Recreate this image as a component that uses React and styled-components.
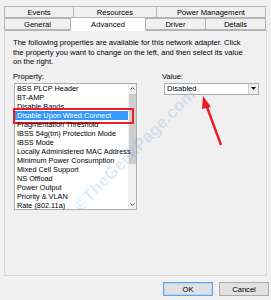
import styled, { createGlobalStyle } from 'styled-components';

const GlobalStyle = createGlobalStyle`
    html, body {
        margin: 0;
        padding: 0;
        background: #f0f0f0;
    }
    * {
        box-sizing: border-box;
    }
`;

const properties = [
    'BSS PLCP Header',
    'BT-AMP',
    'Disable Bands',
    'Disable Upon Wired Connect',
    'Fragmentation Threshold',
    'IBSS 54g(tm) Protection Mode',
    'IBSS Mode',
    'Locally Administered MAC Address',
    'Minimum Power Consumption',
    'Mixed Cell Support',
    'NS Offload',
    'Power Output',
    'Priority & VLAN',
    'Rate (802.11a)',
];

function App () {

    return (
        <>
            <GlobalStyle />
            <Window>

                <TabRow>
                    <Tab w={69}>Events</Tab>
                    <Tab w={83}>Resources</Tab>
                    <Tab w={110}>Power Management</Tab>
                </TabRow>

                <TabRow>
                    <Tab w={66}>General</Tab>
                    <Tab w={76} active>Advanced</Tab>
                    <Tab w={59}>Driver</Tab>
                    <Tab w={61}>Details</Tab>
                </TabRow>

                <Panel>
                    <Description>
                        The following properties are available for this network adapter. Click
                        the property you want to change on the left, and then select its value
                        on the right.
                    </Description>

                    <Columns>
                        <PropertyColumn>
                            <Label>Property:</Label>
                            <ListBox>
                                <Items>
                                    {properties.map((p) => (
                                        <Item key={p} selected={p === 'Disable Upon Wired Connect'}>{p}</Item>
                                    ))}
                                </Items>
                                <ScrollBar>
                                    <ScrollArrow>
                                        <svg width="5" height="3" viewBox="0 0 5 3">
                                            <path d="M0.5 2.6 L2.5 0.6 L4.5 2.6" fill="none" stroke="#555" strokeWidth="1" />
                                        </svg>
                                    </ScrollArrow>
                                    <Track>
                                        <Thumb />
                                    </Track>
                                    <ScrollArrow>
                                        <svg width="5" height="3" viewBox="0 0 5 3">
                                            <path d="M0.5 0.4 L2.5 2.4 L4.5 0.4" fill="none" stroke="#555" strokeWidth="1" />
                                        </svg>
                                    </ScrollArrow>
                                </ScrollBar>
                            </ListBox>
                        </PropertyColumn>

                        <ValueColumn>
                            <Label>Value:</Label>
                            <ComboBox>
                                <ComboText>Disabled</ComboText>
                                <ComboButton>
                                    <svg width="5" height="3" viewBox="0 0 5 3">
                                        <path d="M0 0 L5 0 L2.5 3 Z" fill="#000" />
                                    </svg>
                                </ComboButton>
                            </ComboBox>
                        </ValueColumn>
                    </Columns>
                </Panel>

                <ButtonRow>
                    <DialogButton primary>OK</DialogButton>
                    <DialogButton>Cancel</DialogButton>
                </ButtonRow>

                <Arrow width="30" height="52" viewBox="0 0 30 52">
                    <line x1="23" y1="50" x2="9" y2="12" stroke="#ea1b22" strokeWidth="2.4" />
                    <path d="M5 1 L13 12 L4 14 Z" fill="#ea1b22" />
                </Arrow>

                <Watermark>©TheGeekPage.com</Watermark>

            </Window>
        </>
    );

}

export default App;


const Window = styled.div`
    position: relative;
    width: 271px;
    height: 300px;
    padding: 6px 4px 0 4px;
    overflow: hidden;
    font-family: 'Liberation Sans', Arial, sans-serif;
    font-size: 7.6px;
    color: #000;
`;

const TabRow = styled.div`
    display: flex;
    flex-direction: row;
    height: 12px;
`;

const Tab = styled.div`
    width: ${(p) => p.w}px;
    display: flex;
    align-items: center;
    justify-content: center;
    border: 1px solid #b4b4b4;
    border-right: none;
    background: ${(p) => (p.active ? '#ffffff' : '#f0f0f0')};
    position: relative;

    &:last-child {
        border-right: 1px solid #b4b4b4;
    }

    ${(p) => p.active && `
        margin-top: -1px;
        height: 14px;
        border-bottom: none;
        border-right: 1px solid #b4b4b4;
        z-index: 2;
        & + div { border-left: none; }
    `}
`;

const Panel = styled.div`
    height: 246px;
    border: 1px solid #d9d9d9;
    border-top-color: #b4b4b4;
    background: #f0f0f0;
    padding: 7px 8px 0 8px;
    display: flex;
    flex-direction: column;
`;

const Description = styled.div`
    line-height: 9.5px;
    width: 240px;
`;

const Columns = styled.div`
    display: flex;
    flex-direction: row;
    margin-top: 5px;
`;

const PropertyColumn = styled.div`
    display: flex;
    flex-direction: column;
    width: 124px;
`;

const ValueColumn = styled.div`
    display: flex;
    flex-direction: column;
    margin-left: 25px;
`;

const Label = styled.div`
    height: 10px;
    line-height: 10px;
    margin-bottom: 1px;
`;

const ListBox = styled.div`
    display: flex;
    flex-direction: row;
    margin-left: 1px;
    width: 123px;
    height: 127px;
    border: 1px solid #abadb3;
    background: #ffffff;
`;

const Items = styled.div`
    flex: 1;
    min-width: 0;
    display: flex;
    flex-direction: column;
    padding-top: 0.5px;
`;

const Item = styled.div`
    position: relative;
    height: 9px;
    line-height: 9px;
    padding-left: 2px;
    white-space: nowrap;
    font-size: 7.3px;
    background: ${(p) => (p.selected ? '#3399ff' : 'transparent')};
    color: ${(p) => (p.selected ? '#ffffff' : '#000000')};

    ${(p) => p.selected && `
        &::after {
            content: '';
            position: absolute;
            left: -2px;
            right: -6px;
            top: -3px;
            bottom: -4px;
            border: 2.5px solid #ee1c24;
        }
    `}
`;

const ScrollBar = styled.div`
    width: 8px;
    flex-shrink: 0;
    display: flex;
    flex-direction: column;
    background: #f0f0f0;
`;

const ScrollArrow = styled.div`
    height: 9px;
    display: flex;
    align-items: center;
    justify-content: center;
`;

const Track = styled.div`
    flex: 1;
    display: flex;
    flex-direction: column;
    padding: 1px 0.5px;
`;

const Thumb = styled.div`
    height: 70px;
    background: #cdcdcd;
`;

const ComboBox = styled.div`
    display: flex;
    flex-direction: row;
    align-items: stretch;
    margin-left: 2px;
    width: 95px;
    height: 12px;
    border: 1px solid #abadb3;
    background: #ffffff;
`;

const ComboText = styled.div`
    flex: 1;
    padding-left: 2px;
    line-height: 10px;
    font-size: 7.6px;
`;

const ComboButton = styled.div`
    width: 10px;
    display: flex;
    align-items: center;
    justify-content: center;
    border-left: 1px solid #d0d0d0;
    background: #eeeeee;
`;

const ButtonRow = styled.div`
    display: flex;
    flex-direction: row;
    justify-content: flex-end;
    gap: 6px;
    margin-top: 6px;
    margin-right: -2px;
`;

const DialogButton = styled.div`
    width: 50px;
    height: 14px;
    display: flex;
    align-items: center;
    justify-content: center;
    background: #e1e1e1;
    border: 1px solid ${(p) => (p.primary ? '#5fa3e8' : '#adadad')};
    box-shadow: ${(p) => (p.primary ? 'inset 0 0 0 1px #b6d5f5' : 'none')};
`;

const Arrow = styled.svg`
    position: absolute;
    left: 198px;
    top: 95px;
`;

const Watermark = styled.div`
    position: absolute;
    left: 50px;
    top: 140px;
    width: 170px;
    text-align: center;
    transform: rotate(-45deg);
    font-family: 'Liberation Sans', Arial, sans-serif;
    font-weight: bold;
    font-size: 17px;
    color: rgba(110, 160, 220, 0.22);
    pointer-events: none;
    white-space: nowrap;
`;
